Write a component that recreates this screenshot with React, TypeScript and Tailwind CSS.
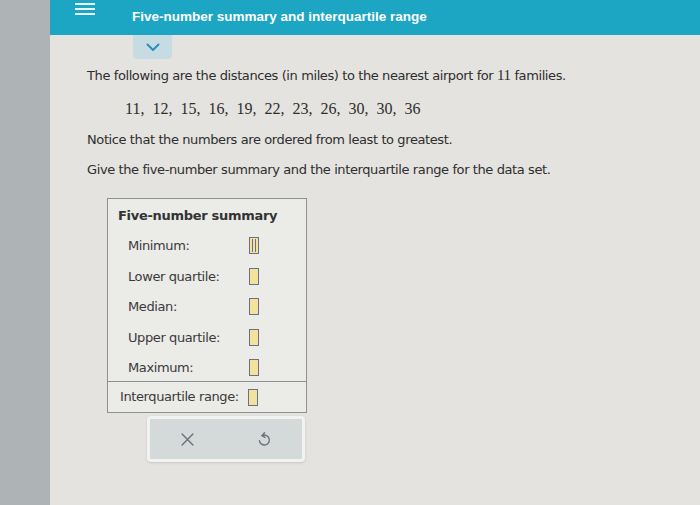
import React from "react";

const rows = ["Minimum:", "Lower quartile:", "Median:", "Upper quartile:", "Maximum:"];

const AnswerBox: React.FC<{ active?: boolean }> = ({ active }) => (
  <span className="inline-flex h-[17px] w-[10px] items-center justify-center border border-[#6f6d8c] bg-[#f1e39c]">
    {active && <span className="h-[13px] w-[4px] border-x border-[#6f6d8c]" />}
  </span>
);

const App: React.FC = () => {
  return (
    <div
      className="flex h-[505px] w-[700px] overflow-hidden bg-[#e4e3df]"
      style={{ fontFamily: '"DejaVu Sans", Verdana, sans-serif' }}
    >
      {/* left rail */}
      <div className="w-[50px] shrink-0 bg-[#aeb4b5]" />

      <div className="flex flex-1 flex-col">
        {/* header */}
        <div className="flex h-[35px] shrink-0 items-start bg-[#1ca6c3]">
          <div className="ml-[25px] mt-[3px] flex w-[20px] flex-col gap-[3px]">
            <span className="h-[2px] bg-white/90" />
            <span className="h-[2px] bg-white/90" />
            <span className="h-[2px] bg-white/90" />
          </div>
          <h1
            className="ml-[37px] mt-[7px] text-[13.5px] font-bold text-white"
            style={{ fontFamily: '"Liberation Sans", Arial, sans-serif' }}
          >
            Five-number summary and interquartile range
          </h1>
        </div>

        {/* collapse tab */}
        <div className="ml-[83px] flex h-[24px] w-[39px] items-center justify-center rounded-b-[4px] bg-[#c4dce2]">
          <svg width="14" height="9" viewBox="0 0 14 9" fill="none">
            <path d="M1.5 1.5L7 7L12.5 1.5" stroke="#2a8fc0" strokeWidth="2" strokeLinecap="round" strokeLinejoin="round" />
          </svg>
        </div>

        <div className="ml-[37px] mt-[6px] text-[13px] tracking-[-0.4px] text-[#2e2e2e]">
          <p className="leading-[20px]">
            The following are the distances (in miles) to the nearest airport for{" "}
            <span className="text-[15px]" style={{ fontFamily: '"Liberation Serif", serif' }}>
              11
            </span>{" "}
            families.
          </p>
          <p
            className="ml-[38px] mt-[12px] text-[16px] leading-[22px] tracking-normal"
            style={{ fontFamily: '"Liberation Serif", "Times New Roman", serif', wordSpacing: "4px" }}
          >
            11, 12, 15, 16, 19, 22, 23, 26, 30, 30, 36
          </p>
          <p className="mt-[10px] leading-[20px]">Notice that the numbers are ordered from least to greatest.</p>
          <p className="mt-[10px] leading-[20px]">Give the five-number summary and the interquartile range for the data set.</p>

          {/* answer table */}
          <div className="ml-[20px] mt-[18px] w-[200px] border border-[#8d9194] bg-[#ebebe8] text-[#3a3a3a]">
            <div className="px-[10px] pt-[7px] text-[13px] font-bold tracking-[-0.3px] text-[#333]">Five-number summary</div>
            <div className="flex flex-col pl-[20px] pt-[5px]">
              {rows.map((r, i) => (
                <div key={r} className="flex h-[30.5px] items-center">
                  <span className="w-[121px]">{r}</span>
                  <AnswerBox active={i === 0} />
                </div>
              ))}
            </div>
            <div className="-mt-[2px] flex h-[31px] items-center border-t border-[#8d9194] pl-[12px]">
              <span className="mr-[9px]">Interquartile range:</span>
              <AnswerBox />
            </div>
          </div>

          {/* action buttons */}
          <div className="ml-[60px] mt-[3px] flex h-[46px] w-[158px] items-center justify-center gap-[63px] rounded-[4px] border-[3px] border-[#f2f2f0] bg-[#d4d9d9] shadow-sm">
            <svg width="13" height="13" viewBox="0 0 12 12" fill="none">
              <path d="M1 1L11 11M11 1L1 11" stroke="#6b7278" strokeWidth="1.3" strokeLinecap="round" />
            </svg>
            <svg width="14" height="16" viewBox="0 0 14 16" fill="none">
              <path d="M5 4.6A5 5 0 1 1 2.4 9.6" stroke="#6b7278" strokeWidth="1.4" strokeLinecap="round" />
              <path d="M7.5 1.8L5 4.6L8 6.4" stroke="#6b7278" strokeWidth="1.4" strokeLinecap="round" strokeLinejoin="round" />
            </svg>
          </div>
        </div>
      </div>
    </div>
  );
};

export default App;
